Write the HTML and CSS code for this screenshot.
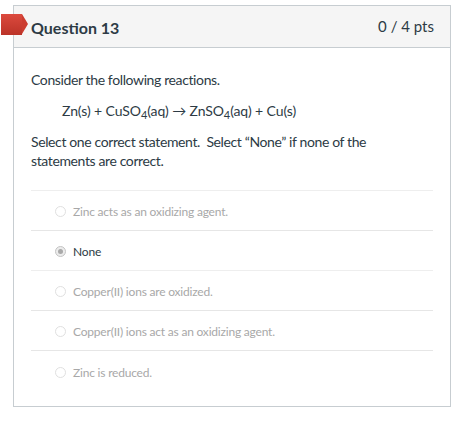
FILE: index.html
```html
<!DOCTYPE html>
<html>
<head>
<meta charset="utf-8">
<link rel="stylesheet" href="styles.css">
</head>
<body>
<div class="card">
  <div class="badge"></div>
  <div class="header">
    <span class="title">Question 13</span>
    <span class="pts">0 / 4 pts</span>
  </div>
  <div class="body">
    <p class="q">Consider the following reactions.</p>
    <p class="q eq">Zn(s) + CuSO<sub>4</sub>(aq) → ZnSO<sub>4</sub>(aq) + Cu(s)</p>
    <p class="q">Select one correct statement.&nbsp; Select “None” if none of the statements are correct.</p>
    <ul class="answers">
      <li class="answer"><span class="radio"></span><span class="label">Zinc acts as an oxidizing agent.</span></li>
      <li class="answer selected"><span class="radio"></span><span class="label">None</span></li>
      <li class="answer"><span class="radio"></span><span class="label">Copper(II) ions are oxidized.</span></li>
      <li class="answer"><span class="radio"></span><span class="label">Copper(II) ions act as an oxidizing agent.</span></li>
      <li class="answer last"><span class="radio"></span><span class="label">Zinc is reduced.</span></li>
    </ul>
  </div>
</div>
</body>
</html>
```
FILE: styles.css
```css
html, body {
  margin: 0;
  padding: 0;
  background: #fff;
}
body {
  font-family: Lato, "Open Sans", sans-serif;
  color: #2d3b45;
}
.card {
  position: relative;
  margin: 5px 0 0 13px;
  width: 438px;
  height: 402px;
  box-sizing: border-box;
  border: 1px solid #c7cdd1;
}
.badge {
  position: absolute;
  left: -13px;
  top: 8px;
  width: 21px;
  height: 21px;
  background: linear-gradient(#dc4a3e, #bb3328);
}
.badge::after {
  content: "";
  position: absolute;
  left: 21px;
  top: 0;
  border-top: 10.5px solid transparent;
  border-bottom: 10.5px solid transparent;
  border-left: 6px solid #cc3d31;
}
.header {
  height: 42px;
  box-sizing: border-box;
  background: #f5f5f5;
  border-bottom: 1px solid #c7cdd1;
  display: flex;
  justify-content: space-between;
  align-items: center;
  padding: 0 16px 0 17px;
}
.title {
  font-size: 16px;
  font-weight: bold;
  color: #2d3b45;
  padding-top: 2px;
}
.pts {
  font-size: 15px;
  color: #2d3b45;
  padding-bottom: 2px;
}
.body {
  padding: 22px 17px 0 17px;
}
.q {
  margin: 0 0 12px 0;
  font-size: 14px;
  letter-spacing: -0.38px;
  line-height: 19px;
  color: #2d3b45;
}
.eq {
  padding-left: 31px;
  letter-spacing: -0.1px;
}
.eq sub {
  font-size: 11px;
  vertical-align: -3px;
  line-height: 0;
}
.answers {
  list-style: none;
  margin: 20px 0 0 0;
  padding: 0;
  border-top: 1px solid #eeeeee;
}
.answer {
  height: 40px;
  box-sizing: border-box;
  border-bottom: 1px solid #e6e6e6;
  display: flex;
  align-items: center;
  padding: 2px 0 0 24px;
  font-size: 12px;
  letter-spacing: -0.2px;
  color: #a8a8a8;
}
.answer.last {
  border-bottom: none;
}
.answer.selected {
  color: #2d3b45;
  border-bottom-color: #eeeeee;
}
.radio {
  width: 9px;
  height: 9px;
  border: 1px solid #e0e0e0;
  border-radius: 50%;
  margin-right: 7px;
  position: relative;
  background: #fff;
}
.selected .radio {
  border-color: #c4c4c4;
  background: #ececec;
}
.selected .radio::after {
  content: "";
  position: absolute;
  left: 2px;
  top: 2px;
  width: 5px;
  height: 5px;
  border-radius: 50%;
  background: #a9a9a9;
}
```
